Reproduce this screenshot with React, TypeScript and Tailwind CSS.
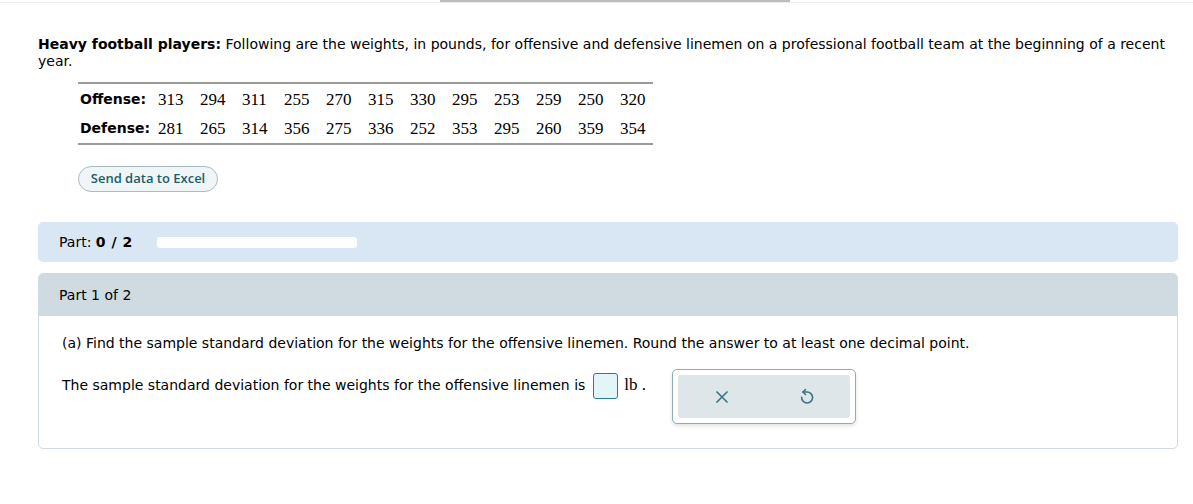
import React from "react";

const offense = [313, 294, 311, 255, 270, 315, 330, 295, 253, 259, 250, 320];
const defense = [281, 265, 314, 356, 275, 336, 252, 353, 295, 260, 359, 354];

function Row({ label, values }: { label: string; values: number[] }) {
  return (
    <div className="flex items-center h-[29px]">
      <div className="w-[80px] pl-[2px] font-bold text-[14px] text-black">{label}</div>
      <div className="flex gap-[18px] font-['Liberation_Serif',serif] text-[17px] text-black">
        {values.map((v, i) => (
          <span key={i} className="w-[24px]">{v}</span>
        ))}
      </div>
    </div>
  );
}

export default function App() {
  return (
    <div className="w-[1193px] h-[504px] bg-white font-['DejaVu_Sans',Verdana,sans-serif] text-[14px] text-black overflow-hidden">
      <div className="h-[3px] border-b border-[#ececec]">
        <div className="ml-[440px] w-[350px] h-[2px] bg-[#bdbdbd]" />
      </div>
      <div className="pl-[38px] pr-[15px]">
        <p className="mt-[33px] leading-[17px] text-[14px]">
          <b>Heavy football players:</b> Following are the weights, in pounds, for offensive and defensive linemen on a professional football team at the beginning of a recent year.
        </p>
        <div className="ml-[40px] mt-[12px] w-[575px] border-y-2 border-[#9b9b96] pt-[1px]">
          <Row label="Offense:" values={offense} />
          <Row label="Defense:" values={defense} />
        </div>
        <button className="ml-[40px] mt-[21px] h-[26px] w-[140px] rounded-full border border-[#a9bcc2] bg-[#f0f6f7] text-[13px] font-semibold text-[#1c5d6c] font-['Open_Sans',sans-serif]">
          Send data to Excel
        </button>
        <div className="mt-[30px] h-[40px] rounded-[5px] bg-[#d9e6f3] flex items-center pl-[21px]">
          <span className="text-[14px]">
            Part: <b className="tracking-[0.5px]">0 / 2</b>
          </span>
          <div className="ml-[24px] w-[200px] h-[11px] rounded-[3px] bg-white" />
        </div>
        <div className="mt-[11px] h-[176px] rounded-[5px] border border-[#cfdbe1] overflow-hidden">
          <div className="h-[42px] bg-[#cfdbe1] flex items-center pl-[20px] text-[14px]">Part 1 of 2</div>
          <div className="pl-[23px] pt-[19px] text-[14px]">
            <p className="leading-[17px]">
              (a) Find the sample standard deviation for the weights for the offensive linemen. Round the answer to at least one decimal point.
            </p>
            <div className="mt-[17px] flex items-start">
              <span className="mt-[8px] leading-[17px]">
                The sample standard deviation for the weights for the offensive linemen is
              </span>
              <div className="ml-[8px] mt-[4px] w-[25px] h-[26px] rounded-[3px] border-[1.5px] border-[#2c7c90] bg-[#e4f5fa]" />
              <span className="ml-[6px] mt-[3px] font-['Liberation_Serif',serif] text-[17px]">lb .</span>
              <div className="ml-[26px] w-[184px] h-[55px] rounded-[5px] border border-[#8fabb6] bg-white p-[5px] shadow-[0_2px_4px_rgba(0,0,0,0.12)]">
                <div className="h-full rounded-[3px] bg-[#dfe6e9] flex items-center">
                  <div className="w-[86px] flex justify-center">
                    <svg width="14" height="14" viewBox="0 0 14 14" className="ml-[2px]">
                      <path d="M1.5 1.5 L12.5 12.5 M12.5 1.5 L1.5 12.5" stroke="#3a7384" strokeWidth="1.6" fill="none" />
                    </svg>
                  </div>
                  <div className="flex-1 flex justify-center">
                    <svg width="16" height="17" viewBox="0 0 16 17">
                      <path d="M6.5 1.5 L4 4 L6.5 6.5" stroke="#3a7384" strokeWidth="1.6" fill="none" strokeLinecap="round" strokeLinejoin="round" />
                      <path d="M4 4 H8 A5.5 5.5 0 1 1 2.6 9.3" stroke="#3a7384" strokeWidth="1.6" fill="none" strokeLinecap="round" />
                    </svg>
                  </div>
                </div>
              </div>
            </div>
          </div>
        </div>
      </div>
    </div>
  );
}
